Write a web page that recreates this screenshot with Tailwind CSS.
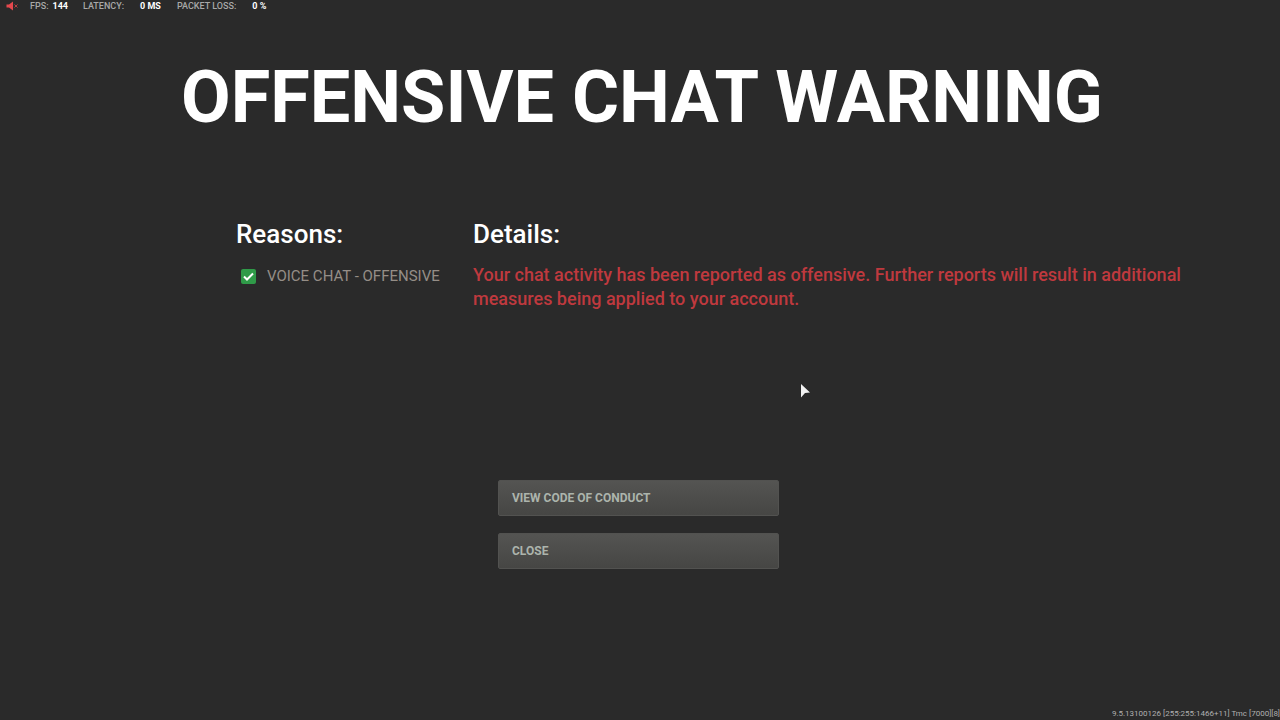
<!DOCTYPE html>
<html lang="en">
<head>
  <meta charset="UTF-8">
  <meta name="viewport" content="width=device-width, initial-scale=1.0">
  <title>Offensive Chat Warning</title>
  <script src="https://cdn.jsdelivr.net/npm/@tailwindcss/browser@4"></script>
</head>
<body class="min-h-screen flex flex-col bg-[#2a2a2a] text-white font-['Roboto',sans-serif]">

  <!-- Network stats -->
  <header class="flex items-center h-3 pl-1.5 text-[9px] leading-3 font-medium text-[#a8a8a8]">
    <svg class="w-3 h-3 mr-3" viewBox="0 0 12 12" aria-hidden="true">
      <path d="M0.500 4.500h2.500l4-3v9l-4-3h-2.500z" fill="#e5484d"/>
      <path d="M8.500 4.500l3 3m0-3l-3 3" stroke="#b04043" stroke-width="1"/>
    </svg>
    <dl class="flex">
      <div class="flex gap-1 w-[53px]"><dt>FPS:</dt><dd class="font-bold text-white">144</dd></div>
      <div class="flex gap-4 w-[94px]"><dt>LATENCY:</dt><dd class="font-bold text-white">0 MS</dd></div>
      <div class="flex gap-4"><dt>PACKET LOSS:</dt><dd class="font-bold text-white">0 %</dd></div>
    </dl>
  </header>

  <main class="flex-1">
    <h1 class="mt-[46px] pl-1 text-center text-[72px] leading-20 font-bold whitespace-nowrap">OFFENSIVE CHAT WARNING</h1>

    <div class="flex mt-[78px] pl-59 pr-16">
      <section class="w-[237px] shrink-0">
        <h2 class="text-[26px] leading-9 font-medium">Reasons:</h2>
        <label class="flex items-center mt-3 pl-[5px] text-[15px] leading-6 text-[#958e87] whitespace-nowrap">
          <span class="relative w-[15px] h-[15px] mr-[11px]">
            <input type="checkbox" checked class="block appearance-none w-[15px] h-[15px] rounded-xs bg-[#2f9a48]">
            <svg class="absolute inset-0 pointer-events-none" viewBox="0 0 15 15" fill="none" aria-hidden="true">
              <path d="M3 7.500l3 3 6-6" stroke="#fff" stroke-width="2"/>
            </svg>
          </span>
          VOICE CHAT - OFFENSIVE
        </label>
      </section>

      <section class="flex-1">
        <h2 class="text-[26px] leading-9 font-medium">Details:</h2>
        <p class="mt-[11px] text-[18px] leading-6 font-medium text-[#bf393e]">Your chat activity has been reported as offensive. Further reports will result in additional measures being applied to your account.</p>
      </section>
    </div>

    <div class="mt-[169px] pr-[3px]">
      <div class="flex flex-col gap-[17px] w-[281px] mx-auto">
        <button type="button" class="h-9 px-[13px] rounded-xs border border-[#525250] bg-linear-to-b from-[#545452] to-[#464644] text-left text-xs font-bold text-[#acb4ac]">VIEW CODE OF CONDUCT</button>
        <button type="button" class="h-9 px-[13px] rounded-xs border border-[#525250] bg-linear-to-b from-[#545452] to-[#464644] text-left text-xs font-bold text-[#acb4ac]">CLOSE</button>
      </div>
    </div>
  </main>

  <footer class="text-right text-[8px] leading-3 text-[#b0b0b0]">9.5.13100126 [255:255:1466+11] Tmc [7000][8]</footer>

  <!-- Pointer -->
  <svg class="absolute left-[800px] top-[383px] w-3 h-4 pointer-events-none" viewBox="0 0 12 16" aria-hidden="true">
    <path d="M1 1l9 8.500-5 0.500-4 4.500z" fill="#f2f2f2"/>
  </svg>
</body>
</html>
